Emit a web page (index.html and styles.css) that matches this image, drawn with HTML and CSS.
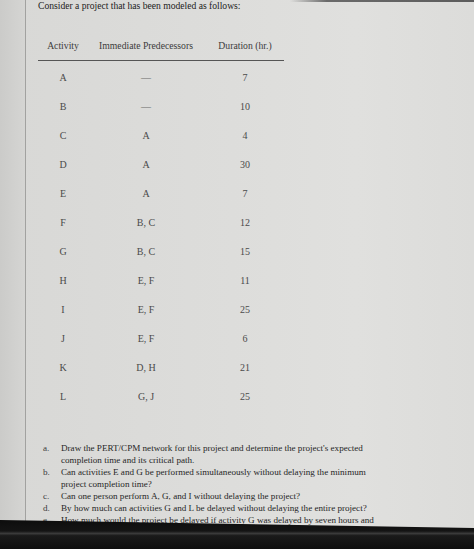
FILE: index.html
```html
<!DOCTYPE html>
<html>
<head>
<meta charset="utf-8">
<link rel="stylesheet" href="styles.css">
</head>
<body>
<div class="screen">
  <div class="margin-strip"></div>
  <div class="paper">
    <p class="title">Consider a project that has been modeled as follows:</p>
    <div class="table">
      <div class="row head">
        <div class="c1">Activity</div>
        <div class="c2">Immediate Predecessors</div>
        <div class="c3">Duration (hr.)</div>
      </div>
      <div class="row"><div class="c1">A</div><div class="c2 dash">—</div><div class="c3">7</div></div>
      <div class="row"><div class="c1">B</div><div class="c2 dash">—</div><div class="c3">10</div></div>
      <div class="row"><div class="c1">C</div><div class="c2">A</div><div class="c3">4</div></div>
      <div class="row"><div class="c1">D</div><div class="c2">A</div><div class="c3">30</div></div>
      <div class="row"><div class="c1">E</div><div class="c2">A</div><div class="c3">7</div></div>
      <div class="row"><div class="c1">F</div><div class="c2">B, C</div><div class="c3">12</div></div>
      <div class="row"><div class="c1">G</div><div class="c2">B, C</div><div class="c3">15</div></div>
      <div class="row"><div class="c1">H</div><div class="c2">E, F</div><div class="c3">11</div></div>
      <div class="row"><div class="c1">I</div><div class="c2">E, F</div><div class="c3">25</div></div>
      <div class="row"><div class="c1">J</div><div class="c2">E, F</div><div class="c3">6</div></div>
      <div class="row"><div class="c1">K</div><div class="c2">D, H</div><div class="c3">21</div></div>
      <div class="row"><div class="c1">L</div><div class="c2">G, J</div><div class="c3">25</div></div>
    </div>
    <ol class="questions">
      <li><span class="lbl">a.</span><span class="txt">Draw the PERT/CPM network for this project and determine the project's expected<br>completion time and its critical path.</span></li>
      <li><span class="lbl">b.</span><span class="txt">Can activities E and G be performed simultaneously without delaying the minimum<br>project completion time?</span></li>
      <li><span class="lbl">c.</span><span class="txt">Can one person perform A, G, and I without delaying the project?</span></li>
      <li><span class="lbl">d.</span><span class="txt">By how much can activities G and L be delayed without delaying the entire project?</span></li>
      <li><span class="lbl">e.</span><span class="txt">How much would the project be delayed if activity G was delayed by seven hours and</span></li>
    </ol>
  </div>
  <div class="bezel-top"></div>
  <div class="bezel-bottom"></div>
</div>
</body>
</html>
```
FILE: styles.css
```css
html, body {
  margin: 0;
  padding: 0;
}
body {
  width: 474px;
  height: 549px;
  overflow: hidden;
  font-family: "Liberation Serif", "Times New Roman", serif;
}
.screen {
  position: relative;
  display: flex;
  width: 474px;
  height: 549px;
  background: linear-gradient(90deg, #d8d8d6 0%, #dcdcda 40%, #e0e0de 75%, #dcdcda 100%);
}
.margin-strip {
  width: 25px;
  flex: none;
  background: linear-gradient(90deg, #cbcbc9, #d5d5d3);
  border-right: 1.5px solid #a2a2a0;
}
.paper {
  flex: 1;
  padding-left: 12px;
}
.title {
  margin: 0;
  font-size: 9.6px;
  line-height: 12px;
  color: #222;
}
.table {
  margin-top: 28px;
  width: 246px;
}
.row {
  display: grid;
  grid-template-columns: 50px 116px 80px;
  height: 29px;
  align-items: center;
  text-align: center;
  font-size: 10px;
  color: #4a4a4a;
}
.row:nth-child(2) {
  margin-top: 1.5px;
}
.row.head {
  height: auto;
  line-height: 12px;
  padding-bottom: 8px;
  border-bottom: 1px solid #555;
  font-size: 9.7px;
  color: #3c3c3c;
}
.row .c3 {
  padding-left: 2px;
}
.dash {
  color: #6a6a6a;
}
.questions {
  list-style: none;
  margin: 31px 0 0;
  padding: 0;
  font-size: 9.1px;
  line-height: 12px;
  color: #262626;
}
.questions li {
  display: flex;
  white-space: nowrap;
}
.lbl {
  width: 18px;
  padding-left: 5px;
  flex: none;
  color: #3a3a3a;
}
.bezel-top {
  position: absolute;
  top: 0;
  left: 290px;
  right: 0;
  height: 2px;
  background: linear-gradient(90deg, rgba(90,90,90,0), #6a6a6a 20%, #5c5c5c);
}
.bezel-bottom {
  position: absolute;
  left: 0;
  right: 0;
  top: 518px;
  bottom: 0;
  background: linear-gradient(180deg, #0c0c0c 0%, #141414 42%, #3a3a3a 50%, #1a1a1a 57%, #0e0e0e 100%);
  clip-path: polygon(0 2px, 100% 10px, 100% 100%, 0 100%);
}
```
